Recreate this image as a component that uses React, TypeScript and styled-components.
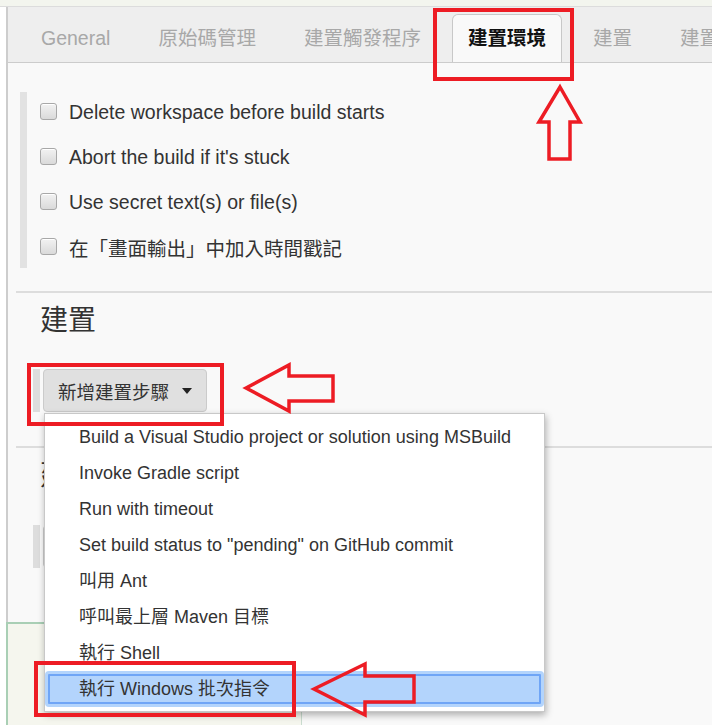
import React from 'react'
import styled, { createGlobalStyle } from 'styled-components'

const GlobalStyle = createGlobalStyle`
  html, body { margin: 0; padding: 0; background: #fff; }
  body {
    font-family: "Liberation Sans", Arial, "Noto Sans CJK TC", sans-serif;
    color: #333;
  }
`

const Page = styled.div`
  position: relative;
  width: 712px;
  height: 725px;
  overflow: hidden;
  background: #fff;
`

const TopStrip = styled.div`
  height: 6px;
  background: #f3f5ee;
  border-bottom: 1px solid #dcdcdc;
`

const Panel = styled.div`
  margin-left: 6px;
  border-left: 2px solid #cdcdcd;
  display: flex;
  flex-direction: column;
`

const TabBar = styled.div`
  display: flex;
  align-items: flex-end;
  gap: 14px;
  height: 55px;
  padding-left: 16px;
  background: #eeeeee;
  border-bottom: 1px solid #cccccc;
  white-space: nowrap;
  overflow: hidden;
`

const Tab = styled.div<{ $active?: boolean }>`
  flex: none;
  height: 48px;
  line-height: 46px;
  padding: 0 ${p => (p.$active ? 15 : 16)}px;
  font-size: 19.5px;
  color: ${p => (p.$active ? '#111' : '#a8a8a8')};
  font-weight: ${p => (p.$active ? 700 : 400)};
  background: ${p => (p.$active ? '#f9f9f9' : 'transparent')};
  border: 1px solid ${p => (p.$active ? '#c8c8c8' : 'transparent')};
  border-bottom: none;
  border-radius: 6px 6px 0 0;
  margin-bottom: -1px;
`

const Content = styled.div`
  background: #f9f9f9;
  display: flex;
  flex-direction: column;
  align-items: flex-start;
  height: 700px;
`

const OptionGroup = styled.div`
  margin: 29px 0 0 12px;
  padding: 9px 0 10px 13px;
  border-left: 7px solid #e2e2e2;
  display: flex;
  flex-direction: column;
  gap: 23px;
`

const OptionRow = styled.label`
  display: flex;
  align-items: center;
  height: 22px;
  font-size: 19.5px;
  color: #333;
`

const Check = styled.span`
  flex: none;
  width: 15px;
  height: 15px;
  margin: -2px 12px 0 0;
  border: 1px solid #a8a8a8;
  border-radius: 3px;
  background: linear-gradient(#f2f2f2, #dadada);
  box-shadow: inset 0 1px 0 #fff;
`

const Divider = styled.div<{ $top: number }>`
  align-self: stretch;
  height: 2px;
  margin: ${p => p.$top}px 0 0 8px;
  background: #dddddd;
`

const SectionTitle = styled.h2`
  margin: 10px 0 0 32px;
  font-family: "Liberation Serif", "Noto Sans CJK TC", serif;
  font-weight: 400;
  font-size: 28px;
  line-height: 36px;
  color: #333;
`

const ButtonRow = styled.div<{ $top: number }>`
  position: relative;
  margin: ${p => p.$top}px 0 0 25px;
  padding-left: 3px;
  border-left: 7px solid #dddddd;
`

const AddButton = styled.div`
  display: flex;
  align-items: center;
  height: 41px;
  padding: 0 14px;
  font-size: 18.5px;
  color: #333;
  background: #e0e0e0;
  border: 1px solid #cbcbcb;
  border-radius: 4px;
`

const Caret = styled.span`
  margin-left: 13px;
  width: 0;
  height: 0;
  border-left: 5px solid transparent;
  border-right: 5px solid transparent;
  border-top: 6px solid #222;
`

const Menu = styled.ul`
  position: absolute;
  z-index: 5;
  top: 44px;
  left: 4px;
  width: 499px;
  margin: 0;
  padding: 5px 0 4px;
  list-style: none;
  background: #fff;
  border: 1px solid #c8c8c8;
  box-shadow: 1px 3px 7px rgba(0, 0, 0, 0.3);
`

const MenuItem = styled.li<{ $selected?: boolean }>`
  height: 36px;
  line-height: 36px;
  padding-left: 34px;
  font-size: 18px;
  color: #333;
  white-space: nowrap;
  background: ${p => (p.$selected ? '#b3d4fc' : 'transparent')};
  outline: ${p => (p.$selected ? '2px solid #6fa5f6' : 'none')};
  outline-offset: -5px;
  border-radius: ${p => (p.$selected ? '4px' : '0')};
`

const SaveBar = styled.div`
  margin: 54px 0 0 -2px;
  width: 293px;
  height: 120px;
  background: #f5f6ee;
  border-top: 2px solid #a9cfb5;
  border-left: 2px solid #a9cfb5;
  border-right: 1px solid #c9dccf;
`

const Overlay = styled.svg`
  position: absolute;
  left: 0;
  top: 0;
  z-index: 10;
  pointer-events: none;
`

const tabs = ['General', '原始碼管理', '建置觸發程序', '建置環境', '建置', '建置後動作']

const options = [
  'Delete workspace before build starts',
  'Abort the build if it\'s stuck',
  'Use secret text(s) or file(s)',
  '在「畫面輸出」中加入時間戳記',
]

const steps = [
  'Build a Visual Studio project or solution using MSBuild',
  'Invoke Gradle script',
  'Run with timeout',
  'Set build status to "pending" on GitHub commit',
  '叫用 Ant',
  '呼叫最上層 Maven 目標',
  '執行 Shell',
  '執行 Windows 批次指令',
]

const App = () => {
  return (
    <Page>
      <GlobalStyle />
      <TopStrip />
      <Panel>
        <TabBar>
          {tabs.map(t => (
            <Tab key={t} $active={t === '建置環境'}>{t}</Tab>
          ))}
        </TabBar>
        <Content>
          <OptionGroup>
            {options.map(o => (
              <OptionRow key={o}>
                <Check />
                {o}
              </OptionRow>
            ))}
          </OptionGroup>
          <Divider $top={23} />
          <SectionTitle>建置</SectionTitle>
          <ButtonRow $top={30}>
            <AddButton>
              新增建置步驟
              <Caret />
            </AddButton>
            <Menu>
              {steps.map((s, i) => (
                <MenuItem key={s} $selected={i === steps.length - 1}>{s}</MenuItem>
              ))}
            </Menu>
          </ButtonRow>
          <Divider $top={34} />
          <SectionTitle>建置後動作</SectionTitle>
          <ButtonRow $top={31}>
            <AddButton>
              新增建置後動作
              <Caret />
            </AddButton>
          </ButtonRow>
          <SaveBar />
        </Content>
      </Panel>

      <Overlay width="712" height="725" viewBox="0 0 712 725">
        <g fill="none" stroke="#ed1c24" strokeWidth="4">
          <rect x="435" y="10" width="137" height="69" />
          <rect x="29" y="365" width="193" height="59" />
          <rect x="36" y="663" width="258" height="52" />
        </g>
        <g fill="none" stroke="#ed1c24" strokeWidth="3.5" strokeLinejoin="miter">
          <polygon points="560,87 580,122 570,122 570,159 549,159 549,122 539,122" />
          <polygon points="246,388 289,365 289,376 333,376 333,401 289,401 289,411" />
          <polygon points="314,689 365,664 365,676 414,676 414,702 365,702 365,715" />
        </g>
      </Overlay>
    </Page>
  )
}

export default App
